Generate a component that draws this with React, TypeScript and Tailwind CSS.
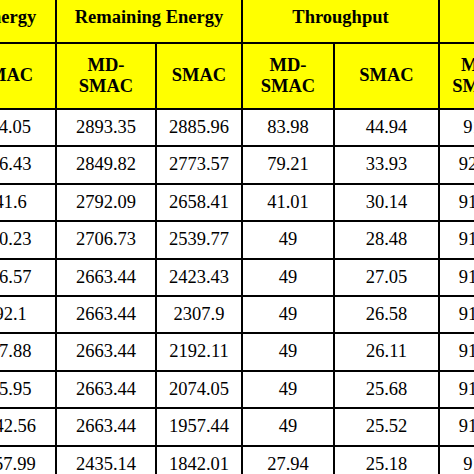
import React from "react";

const rows: string[][] = [
  ["106.65", "114.05", "2893.35", "2885.96", "83.98", "44.94", "91.7", "90.12"],
  ["150.18", "226.43", "2849.82", "2773.57", "79.21", "33.93", "92.35", "88.41"],
  ["207.91", "341.6", "2792.09", "2658.41", "41.01", "30.14", "91.84", "86.02"],
  ["293.27", "460.23", "2706.73", "2539.77", "49", "28.48", "91.76", "85.37"],
  ["336.56", "576.57", "2663.44", "2423.43", "49", "27.05", "91.63", "84.90"],
  ["336.56", "692.1", "2663.44", "2307.9", "49", "26.58", "91.52", "84.11"],
  ["336.56", "807.88", "2663.44", "2192.11", "49", "26.11", "91.47", "83.65"],
  ["336.56", "925.95", "2663.44", "2074.05", "49", "25.68", "91.38", "83.20"],
  ["336.56", "1042.56", "2663.44", "1957.44", "49", "25.52", "91.29", "82.74"],
  ["564.86", "1157.99", "2435.14", "1842.01", "27.94", "25.18", "91.2", "82.31"],
];

const sub = ["MD-SMAC", "SMAC", "MD-SMAC", "SMAC", "MD-SMAC", "SMAC", "MD-SMAC", "SMAC"];
const groups = ["Consumed Energy", "Remaining Energy", "Throughput", "PDR"];

export default function App() {
  return (
    <div className="w-[474px] h-[474px] overflow-hidden bg-white font-['Liberation_Serif',serif] text-black">
      <div className="grid w-max gap-[2px] bg-black ml-[-129px] mt-[-6px] grid-cols-[84px_98px_98px_84px_90px_103px_79px_84px] grid-rows-[48px_64px_repeat(10,35.4px)] text-[18.5px] leading-[1.15]">
        {groups.map((g) => (
          <div
            key={g}
            className="col-span-2 bg-[#ffff00] font-bold flex items-center justify-center text-center whitespace-nowrap"
          >
            {g}
          </div>
        ))}
        {sub.map((s, i) => (
          <div
            key={"s" + i}
            className="bg-[#ffff00] font-bold flex items-center justify-center text-center px-[6px]"
          >
            {s === "MD-SMAC" ? (
              <span>
                MD-
                <br />
                SMAC
              </span>
            ) : (
              <span>{s}</span>
            )}
          </div>
        ))}
        {rows.map((r, ri) =>
          r.map((v, ci) => (
            <div
              key={ri + "-" + ci}
              className="bg-white flex items-center justify-center text-center whitespace-nowrap"
            >
              {v}
            </div>
          ))
        )}
      </div>
    </div>
  );
}
